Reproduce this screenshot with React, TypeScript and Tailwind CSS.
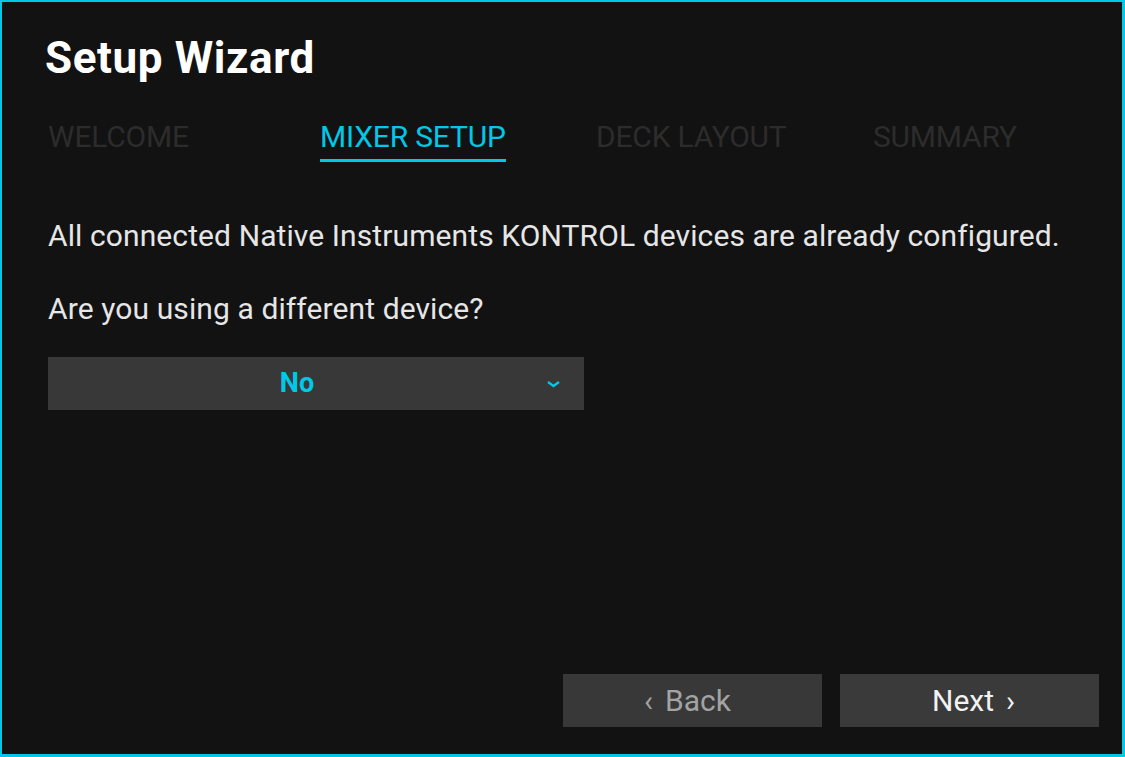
const tabs = [
  { label: "WELCOME", w: "w-[272px]" },
  { label: "MIXER SETUP", w: "w-[276px]" },
  { label: "DECK LAYOUT", w: "w-[277px]" },
  { label: "SUMMARY", w: "w-[200px]" },
];

export default function App() {
  const active = 1;
  return (
    <div
      className="flex h-[757px] w-[1125px] flex-col overflow-hidden border-t-2 border-l-2 border-r-[3px] border-b-[3px] border-[#00c8e6] bg-[#121212] text-white"
      style={{ fontFamily: "Roboto, 'Liberation Sans', sans-serif" }}
    >
      <h1 className="ml-[43px] mt-[30px] text-[44px] font-bold leading-[52px] tracking-[0.6px]">Setup Wizard</h1>

      {/* step tabs */}
      <div className="ml-[46px] mt-[35px] flex">
        {tabs.map((t, i) => (
          <div key={t.label} className={`${t.w} shrink-0`}>
            <div
              className={`inline-block text-[30px] leading-[36px] tracking-[-0.2px] ${i === active ? "text-[#00c8e6]" : "text-[#2c2c2c]"}`}
            >
              {t.label}
              <div className={`mt-[4px] h-[3px] ${i === active ? "bg-[#00c8e6]" : "bg-transparent"}`} />
            </div>
          </div>
        ))}
      </div>

      <p className="ml-[46px] mt-[56px] text-[30px] leading-[36px] tracking-[0.1px] text-[#e6e6e6]">
        All connected Native Instruments KONTROL devices are already configured.
      </p>
      <p className="ml-[46px] mt-[37px] text-[30px] leading-[36px] tracking-[0.1px] text-[#e6e6e6]">
        Are you using a different device?
      </p>

      <button className="ml-[46px] mt-[30px] flex h-[53px] w-[536px] items-center bg-[#383838]">
        <span className="flex-1 text-center text-[27px] font-bold text-[#00c8e6]">No</span>
        <span className="flex w-[38px] justify-start">
          <svg width="15" height="8" viewBox="0 0 15 8" fill="none">
            <path d="M2 2l5.5 4 5.5-4" stroke="#00c8e6" strokeWidth="2.4" />
          </svg>
        </span>
      </button>

      <div className="mt-auto mb-[27px] mr-[23px] flex justify-end gap-[18px]">
        <button className="flex h-[53px] w-[259px] items-center justify-center gap-[12px] bg-[#383838] pr-[10px] text-[30px] text-[#a3a3a3]">
          <span>‹</span>
          <span>Back</span>
        </button>
        <button className="flex h-[53px] w-[259px] items-center justify-center gap-[12px] bg-[#3a3a3a] pl-[8px] text-[30px] text-[#f2f2f2]">
          <span>Next</span>
          <span>›</span>
        </button>
      </div>
    </div>
  );
}
